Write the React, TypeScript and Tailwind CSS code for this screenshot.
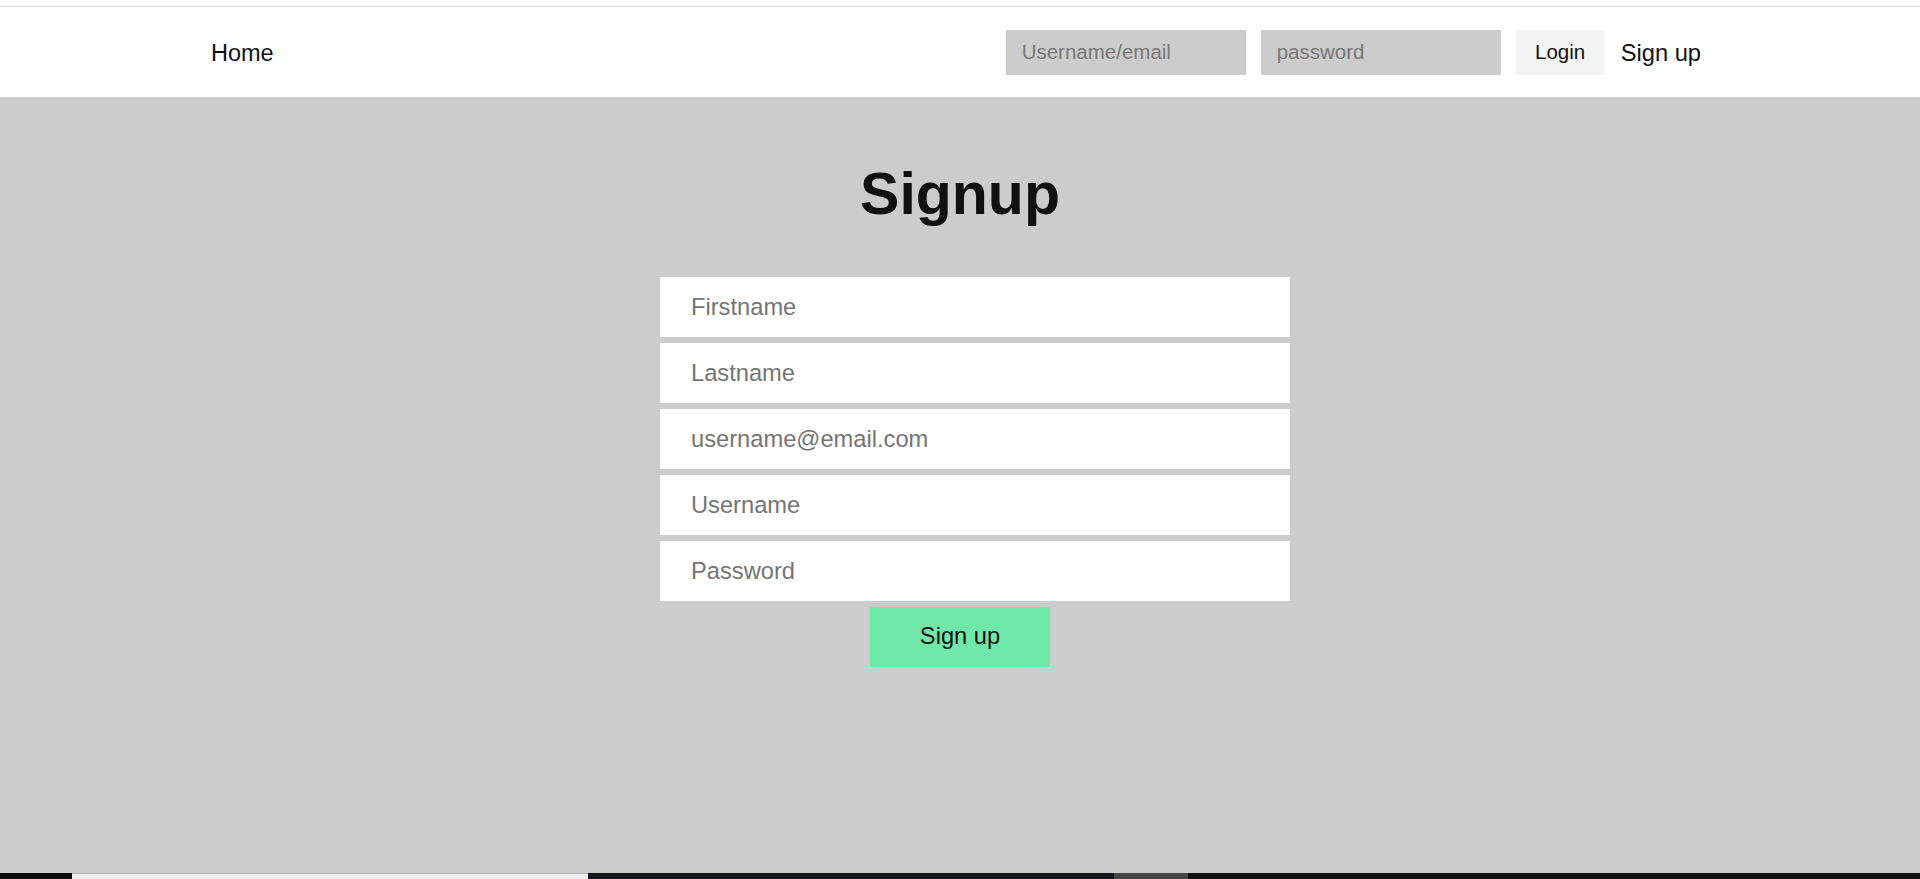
import React from "react";

export default function App() {
  const fieldCls =
    "block w-[630px] h-[60px] bg-white pl-[31px] pr-[15px] text-[23.7px] text-[#111] placeholder:text-[#757575] outline-none border-0";
  return (
    <div
      className="flex h-screen w-full flex-col overflow-hidden bg-[#cccccc]"
      style={{ fontFamily: '"Liberation Sans", Arial, sans-serif' }}
    >
      <div className="h-[6px] shrink-0 bg-white" />
      <div className="h-px shrink-0 bg-[#dcdcdc]" />
      <header className="h-[90px] shrink-0 bg-white">
        <div className="mx-auto flex h-full w-[1500px] items-center justify-between">
          <a className="mt-[3px] ml-[1px] text-[23.5px] leading-none text-[#111]">Home</a>
          <div className="flex items-center">
            <input
              className="h-[45px] w-[240px] bg-[#cccccc] pl-[16px] text-[20.5px] text-[#111] placeholder:text-[#777777] outline-none"
              placeholder="Username/email"
            />
            <input
              className="ml-[15px] h-[45px] w-[240px] bg-[#cccccc] pl-[16px] text-[20.5px] text-[#111] placeholder:text-[#777777] outline-none"
              placeholder="password"
              type="password"
            />
            <button className="ml-[15px] h-[45px] w-[89px] bg-[#f3f3f3] text-[20.5px] text-[#111]">
              Login
            </button>
            <a className="mt-[3px] ml-[16px] mr-[9px] text-[23.7px] leading-none text-[#111]">
              Sign up
            </a>
          </div>
        </div>
      </header>
      <main className="flex flex-1 flex-col items-center">
        <h1 className="mt-[68px] text-[59px] font-bold leading-none text-[#111]">Signup</h1>
        <form className="mt-[53px] flex w-[600px] flex-col gap-[6px] self-center">
          <input className={fieldCls} placeholder="Firstname" />
          <input className={fieldCls} placeholder="Lastname" />
          <input className={fieldCls} placeholder="username@email.com" />
          <input className={fieldCls} placeholder="Username" />
          <input className={fieldCls} placeholder="Password" type="password" />
          <button
            type="button"
            className="h-[60px] w-[180px] self-center bg-[#6fe9aa] text-[23.7px] text-[#111]"
          >
            Sign up
          </button>
        </form>
      </main>
      <div className="flex h-[6px] shrink-0">
        <div className="w-[72px] bg-[#0b0b0b]" />
        <div className="w-[516px] border-t border-[#aaaaaa] bg-[#eeeeee]" />
        <div className="w-[526px] bg-[#15151d]" />
        <div className="w-[74px] bg-[#444444]" />
        <div className="flex-1 bg-[#121212]" />
      </div>
    </div>
  );
}
